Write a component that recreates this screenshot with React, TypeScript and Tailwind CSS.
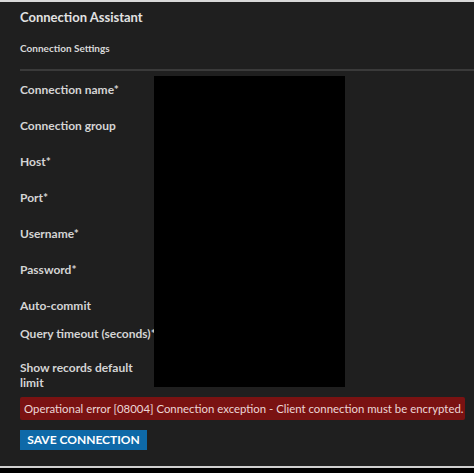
import React from 'react';

type Field = {
  label: string;
  rowClass: string;
};

const fields: Field[] = [
  { label: 'Connection name*', rowClass: 'h-[36px] items-center' },
  { label: 'Connection group', rowClass: 'h-[36px] items-center' },
  { label: 'Host*', rowClass: 'h-[36px] items-center' },
  { label: 'Port*', rowClass: 'h-[36px] items-center' },
  { label: 'Username*', rowClass: 'h-[36px] items-center' },
  { label: 'Password*', rowClass: 'h-[36px] items-center' },
  { label: 'Auto-commit', rowClass: 'h-[36px] items-center' },
  { label: 'Query timeout (seconds)*', rowClass: 'h-[20px] items-center' },
  { label: 'Show records default\nlimit', rowClass: 'pt-[17px] items-start' },
];

const App: React.FC = () => {
  return (
    <div
      className="h-[473px] w-[474px] flex flex-col bg-[#1f1f1f] overflow-hidden"
      style={{ fontFamily: 'Lato, "Open Sans", sans-serif' }}
    >
      <div className="h-[2px] bg-[#d9d9d9]" />

      <div className="flex-1 flex flex-col pl-5">
        <h1 className="mt-[5px] text-[13px] leading-[20px] font-bold text-[#e2e2e2]">
          Connection Assistant
        </h1>
        <h2 className="mt-[13px] text-[10px] leading-[16px] font-bold text-[#d8d8d8]">
          Connection Settings
        </h2>
        <div className="mt-[13px] h-[2px] bg-[#3a3a3a]" />

        <div className="flex">
          {/* Labels */}
          <div className="w-[134px] flex flex-col">
            {fields.map((f) => (
              <div key={f.label} className={`flex ${f.rowClass}`}>
                <span className="text-[12px] leading-[15px] font-bold text-[#d4d4d4] whitespace-pre">
                  {f.label}
                </span>
              </div>
            ))}
          </div>

          {/* Input column (values hidden) */}
          <div className="relative mt-[5px] w-[191px] h-[311px] bg-black" />
        </div>

        <div className="mt-[7px] mr-[9px] h-[23px] rounded-[2px] bg-[#7a1212] px-[4px] flex items-center">
          <span className="text-[11.4px] leading-[23px] text-[#ecd6d6] whitespace-nowrap">
            Operational error [08004] Connection exception - Client connection must be encrypted.
          </span>
        </div>

        <button className="mt-[10px] self-start h-[20px] w-[127px] bg-[#0e69a8] text-white text-[12px] font-bold leading-[20px]">
          SAVE CONNECTION
        </button>
      </div>

      <div className="h-[2px] bg-[#cfcfcf]" />
      <div className="h-[5px] bg-black" />
    </div>
  );
};

export default App;
